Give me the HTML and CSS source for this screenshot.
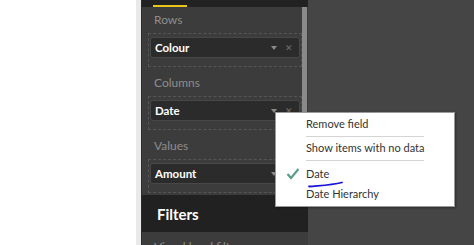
FILE: index.html
```html
<!DOCTYPE html>
<html lang="en">
<head>
    <meta charset="UTF-8">
    <title>Fields pane</title>
    <link rel="stylesheet" href="styles.css">
</head>
<body>
    <div class="canvas"></div>
    <div class="edge"></div>

    <!-- Fields pane -->
    <div class="pane">
        <div class="pane-tabs"><span class="tab-active"></span></div>
        <div class="pane-body">
            <div class="section">
                <div class="section-label">Rows</div>
                <div class="well">
                    <div class="pill">
                        <span class="pill-name">Colour</span>
                        <span class="pill-arrow"></span>
                        <span class="pill-close">&#x2715;</span>
                    </div>
                </div>
            </div>
            <div class="section">
                <div class="section-label">Columns</div>
                <div class="well">
                    <div class="pill">
                        <span class="pill-name">Date</span>
                        <span class="pill-arrow"></span>
                        <span class="pill-close">&#x2715;</span>
                    </div>
                </div>
            </div>
            <div class="section">
                <div class="section-label">Values</div>
                <div class="well">
                    <div class="pill">
                        <span class="pill-name">Amount</span>
                        <span class="pill-arrow"></span>
                        <span class="pill-close">&#x2715;</span>
                    </div>
                </div>
            </div>
            <div class="filters-head">Filters</div>
            <div class="filters-sub">Visual level filters</div>
        </div>
        <div class="scrollbar"></div>
    </div>

    <div class="report"></div>

    <!-- Context menu for the Date field -->
    <div class="menu">
        <div class="menu-item">Remove field</div>
        <div class="menu-sep"></div>
        <div class="menu-item">Show items with no data</div>
        <div class="menu-sep"></div>
        <div class="menu-item checked">
            <svg class="check" width="14" height="12" viewBox="0 0 14 12">
                <polyline points="1.5,6 5,10 12.5,1" fill="none" stroke="#5a9e8c" stroke-width="2.2"/>
            </svg>
            Date
        </div>
        <div class="menu-item">Date Hierarchy</div>
        <svg class="scribble" width="36" height="8" viewBox="0 0 36 8">
            <path d="M1 6.5 C 10 5.5, 22 5.5, 34 2.5" fill="none" stroke="#1a14d8" stroke-width="1.8" stroke-linecap="round"/>
        </svg>
    </div>
</body>
</html>
```

FILE: styles.css
```css
/* Page frame */
body {
    margin: 0;
    height: 245px;
    display: flex;
    overflow: hidden;
    font-family: Lato, "Open Sans", sans-serif;
    background-color: #454545;
}

.canvas {
    width: 136px;
    background-color: #ffffff;
}

.edge {
    width: 5px;
    background-color: #e9e9e9;
    border-right: 1px solid #2a2a2a;
}

/* Fields pane */
.pane {
    width: 166px;
    position: relative;
    background-color: #3c3c3c;
    display: flex;
    flex-direction: column;
    overflow: hidden;
}

.pane-tabs {
    flex-shrink: 0;
    height: 7px;
    background-color: #222222;
    position: relative;
}

.tab-active {
    position: absolute;
    left: 11px;
    top: 5px;
    width: 34px;
    height: 2px;
    background-color: #e8c51a;
}

.pane-body {
    flex: 1;
    padding-right: 6px;
}

.section {
    padding: 5px 0 3px 6px;
}

.section-label {
    padding-left: 6px;
    font-size: 12px;
    line-height: 16px;
    color: #8e8e8e;
}

.well {
    margin-top: 5px;
    border: 1px dashed #555555;
    padding: 3px 1px 8px 1px;
}

.pill {
    height: 21px;
    display: flex;
    align-items: center;
    background-color: #2b2b2b;
    border: 1px solid #474747;
    border-radius: 3px;
    box-sizing: border-box;
    padding: 0 6px 0 4px;
}

.pill-name {
    flex: 1;
    font-size: 11.5px;
    font-weight: bold;
    color: #ffffff;
}

.pill-arrow {
    width: 0;
    height: 0;
    border-left: 3px solid transparent;
    border-right: 3px solid transparent;
    border-top: 4px solid #8a8a8a;
    margin-right: 8px;
}

.pill-close {
    font-size: 9px;
    color: #6f6f6f;
}

.filters-head {
    margin-top: -1px;
    margin-right: -6px;
    height: 37px;
    background-color: #212121;
    padding-left: 15px;
    font-size: 15px;
    font-weight: bold;
    line-height: 39px;
    color: #ffffff;
}

.filters-sub {
    padding: 7px 0 0 12px;
    font-size: 12px;
    color: #8e8e8e;
}

.scrollbar {
    position: absolute;
    right: 1px;
    top: 7px;
    bottom: 50px;
    width: 5px;
    background-color: #8a8a8a;
}

/* Report canvas to the right */
.report {
    flex: 1;
    background-color: #454545;
}

/* Context menu */
.menu {
    position: absolute;
    left: 275px;
    top: 112px;
    width: 178px;
    height: 92px;
    padding-top: 1px;
    box-sizing: content-box;
    background-color: #ffffff;
    border: 1px solid #9a9a9a;
    box-shadow: 1px 1px 2px rgba(0, 0, 0, 0.35);
    font-size: 11px;
    color: #333333;
}

.menu-item {
    position: relative;
    padding-left: 30px;
    line-height: 20px;
}

.menu-sep {
    height: 1px;
    margin: 2px 30px 1px 30px;
    background-color: #d4d4d4;
}

.checked {
    margin-top: 3px;
}

.check {
    position: absolute;
    left: 10px;
    top: 4px;
}

.scribble {
    position: absolute;
    left: 32px;
    top: 67px;
}
```
